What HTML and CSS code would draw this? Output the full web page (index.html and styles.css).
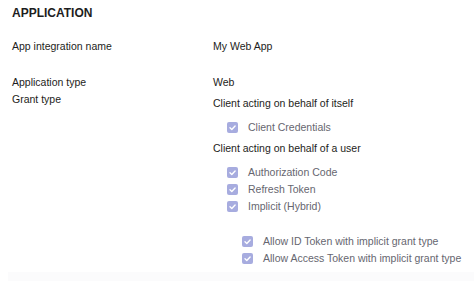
FILE: index.html
```html
<!DOCTYPE html>
<html>
<head>
<meta charset="utf-8">
<link rel="stylesheet" href="styles.css">
</head>
<body>
<section class="panel">
  <h2 class="title">APPLICATION</h2>
  <div class="row row-name">
    <div class="label">App integration name</div>
    <div class="value">My Web App</div>
  </div>
  <div class="row row-type">
    <div class="label">Application type</div>
    <div class="value">Web</div>
  </div>
  <div class="row row-grant">
    <div class="label">Grant type</div>
    <div class="value grant">
      <div class="group-title">Client acting on behalf of itself</div>
      <div class="checks first">
        <div class="check"><span class="box"><svg viewBox="0 0 11 11"><path d="M3 5.7 L4.8 7.4 L8.1 3.9" fill="none" stroke="#fff" stroke-width="1.4" stroke-linecap="round" stroke-linejoin="round"/></svg></span><span>Client Credentials</span></div>
      </div>
      <div class="group-title">Client acting on behalf of a user</div>
      <div class="checks">
        <div class="check"><span class="box"><svg viewBox="0 0 11 11"><path d="M3 5.7 L4.8 7.4 L8.1 3.9" fill="none" stroke="#fff" stroke-width="1.4" stroke-linecap="round" stroke-linejoin="round"/></svg></span><span>Authorization Code</span></div>
        <div class="check"><span class="box"><svg viewBox="0 0 11 11"><path d="M3 5.7 L4.8 7.4 L8.1 3.9" fill="none" stroke="#fff" stroke-width="1.4" stroke-linecap="round" stroke-linejoin="round"/></svg></span><span>Refresh Token</span></div>
        <div class="check"><span class="box"><svg viewBox="0 0 11 11"><path d="M3 5.7 L4.8 7.4 L8.1 3.9" fill="none" stroke="#fff" stroke-width="1.4" stroke-linecap="round" stroke-linejoin="round"/></svg></span><span>Implicit (Hybrid)</span></div>
        <div class="checks nested">
          <div class="check"><span class="box"><svg viewBox="0 0 11 11"><path d="M3 5.7 L4.8 7.4 L8.1 3.9" fill="none" stroke="#fff" stroke-width="1.4" stroke-linecap="round" stroke-linejoin="round"/></svg></span><span>Allow ID Token with implicit grant type</span></div>
          <div class="check"><span class="box"><svg viewBox="0 0 11 11"><path d="M3 5.7 L4.8 7.4 L8.1 3.9" fill="none" stroke="#fff" stroke-width="1.4" stroke-linecap="round" stroke-linejoin="round"/></svg></span><span>Allow Access Token with implicit grant type</span></div>
        </div>
      </div>
    </div>
  </div>
</section>
<div class="footer-band"></div>
</body>
</html>
```
FILE: styles.css
```css
html, body {
  margin: 0;
  padding: 0;
  background: #ffffff;
}
body {
  font-family: "Liberation Sans", Arial, sans-serif;
  font-size: 10.5px;
  line-height: 17px;
  color: #1d1d21;
  width: 474px;
  height: 281px;
  overflow: hidden;
  white-space: nowrap;
}
.panel {
  padding: 4.5px 0 0 12px;
  height: 267.5px;
  box-sizing: border-box;
}
.title {
  margin: 0;
  font-size: 12px;
  font-weight: 700;
  line-height: 17px;
}
.row {
  display: grid;
  grid-template-columns: 201px 1fr;
}
.row-name { margin-top: 16px; }
.row-type { margin-top: 19px; }
.row-grant { margin-top: 0; }
.grant { padding-top: 4px; }
.checks {
  padding-left: 14px;
  display: flex;
  flex-direction: column;
  margin-top: 7px;
  margin-bottom: 4px;
}
.checks.nested {
  padding-left: 15px;
  margin-top: 18px;
  margin-bottom: 0;
}
.check {
  display: flex;
  align-items: center;
  gap: 10px;
  color: #66666f;
}
.box {
  width: 11px;
  height: 11px;
  border-radius: 2px;
  background: #a7acdf;
  display: inline-flex;
  flex: none;
}
.box svg { width: 11px; height: 11px; }
.footer-band {
  margin-left: 8px;
  height: 9px;
  margin-top: 4.5px;
  background: #fbfbfc;
}
```
